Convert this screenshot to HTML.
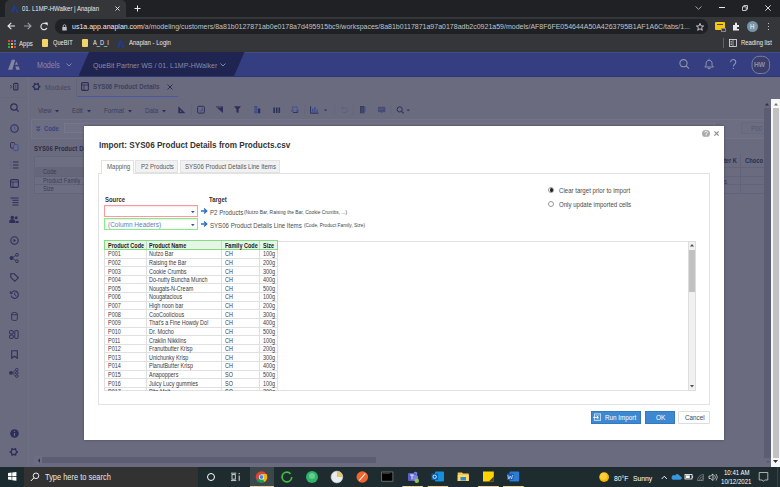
<!DOCTYPE html>
<html><head><meta charset="utf-8">
<style>
*{margin:0;padding:0;box-sizing:border-box}
html,body{width:780px;height:487px;overflow:hidden;background:#6b6b80;font-family:"Liberation Sans",sans-serif}
.a{position:absolute}
.t{position:absolute;white-space:nowrap;line-height:1;transform-origin:0 0;transform:scaleX(.87)}
svg{position:absolute;overflow:visible}
</style></head><body>
<!-- ============ CHROME ============ -->
<div class="a" style="left:0;top:0;width:780px;height:17px;background:#202124"></div>
<div class="a" style="left:4.5px;top:0;width:121.5px;height:17px;background:#35363a;border-radius:5px 5px 0 0"></div>
<svg style="left:10.5px;top:5px" width="8" height="8" viewBox="0 0 8 8"><path d="M0 7.5L2.6 0.6H4.6L2.4 7.5Z M5.2 1.8L6.3 4H4.1Z M4.5 5H6.8L7.4 7.5H5.2Z" fill="#1c3d9c"/></svg>
<div class="t" style="left:22px;top:5.5px;font-size:6.90px;color:#e8eaed">01. L1MP-HWalker | Anaplan</div>
<svg style="left:115px;top:6px" width="5" height="5"><path d="M0.5 0.5L4.5 4.5M4.5 0.5L0.5 4.5" stroke="#e8eaed" stroke-width="0.9"/></svg>
<svg style="left:134px;top:5px" width="7" height="7"><path d="M3.5 0.5V6.5M0.5 3.5H6.5" stroke="#e8eaed" stroke-width="1"/></svg>
<!-- window controls -->
<svg style="left:695px;top:5.5px" width="7" height="4"><path d="M0.5 0.5L3.5 3.3L6.5 0.5" stroke="#bdc1c6" stroke-width="0.8" fill="none"/></svg>
<div class="a" style="left:719px;top:7px;width:6px;height:1px;background:#e8eaed"></div>
<svg style="left:742px;top:4.5px" width="6" height="6"><path d="M0.5 1.8H4.2V5.5H0.5Z M1.8 1.8V0.5H5.5V4.2H4.2" stroke="#e8eaed" stroke-width="0.8" fill="none"/></svg>
<svg style="left:765px;top:4.5px" width="6" height="6"><path d="M0.3 0.3L5.7 5.7M5.7 0.3L0.3 5.7" stroke="#e8eaed" stroke-width="0.9"/></svg>

<!-- toolbar -->
<div class="a" style="left:0;top:17px;width:780px;height:35px;background:#35363a"></div>
<svg style="left:7px;top:22px" width="9" height="8"><path d="M8 4H1.2M4.3 0.8L1 4L4.3 7.2" stroke="#e8eaed" stroke-width="1.1" fill="none"/></svg>
<svg style="left:23px;top:22px" width="9" height="8"><path d="M1 4H7.8M4.7 0.8L8 4L4.7 7.2" stroke="#9aa0a6" stroke-width="1.1" fill="none"/></svg>
<svg style="left:35px;top:18px" width="20" height="16" viewBox="35 18 20 16"><path d="M46.3 24.2A3.2 3.2 0 1 0 46.9 28.0" stroke="#e8eaed" stroke-width="1.1" fill="none"/><path d="M44.5 22.6H47.7V25.8Z" fill="#f4f4f4"/></svg>
<div class="a" style="left:55px;top:19.4px;width:653px;height:14.2px;background:#202124;border-radius:7.1px"></div>
<svg style="left:61.5px;top:23.5px" width="5" height="7"><path d="M1.2 3V2A1.3 1.3 0 0 1 3.8 2V3" stroke="#bdc1c6" stroke-width="0.8" fill="none"/><rect x="0.3" y="3" width="4.4" height="3.5" fill="#bdc1c6"/></svg>
<div class="t" style="left:72px;top:23.2px;font-size:8.05px;color:#bfc3c8"><span style="color:#e8eaed">us1a.app.anaplan.com</span>/a/modeling/customers/8a81b0127871ab0e0178a7d495915bc9/workspaces/8a81b0117871a97a0178adb2c0921a59/models/AF8F6FE054644A50A4263795B1AF1A6C/tabs/1...</div>
<svg style="left:695.5px;top:23px" width="8" height="8"><path d="M4 0.4L5 2.9L7.6 3L5.6 4.7L6.3 7.3L4 5.8L1.7 7.3L2.4 4.7L0.4 3L3 2.9Z" stroke="#e8eaed" stroke-width="0.8" fill="none"/></svg>
<div class="a" style="left:715px;top:22px;width:10px;height:8px;background:#f5c518;border-radius:1px"></div>
<div class="a" style="left:717px;top:24px;width:6px;height:1px;background:#5a4a10"></div>
<div class="a" style="left:721px;top:28px;width:5px;height:4px;background:#3c3c3c;border:0.5px solid #888"></div>
<svg style="left:732px;top:22px" width="9" height="9"><path d="M1 3H3V1.5A1 1 0 0 1 5 1.5V3H7V5H5.8A1 1 0 0 0 5.8 7H7V8.5H1Z" fill="#e8eaed"/></svg>
<div class="a" style="left:747px;top:21px;width:11px;height:11px;border-radius:50%;background:#7a93a6"></div>
<div class="t" style="left:750.3px;top:23.6px;font-size:6.90px;color:#fff">H</div>
<div class="a" style="left:768px;top:22.5px;width:1.3px;height:1.3px;background:#e8eaed;border-radius:50%;box-shadow:0 3px 0 #e8eaed,0 6px 0 #e8eaed"></div>

<!-- bookmarks -->
<svg style="left:7.5px;top:39.5px" width="8" height="8"><g>
<rect x="0" y="0" width="2" height="2" fill="#ea4335"/><rect x="3" y="0" width="2" height="2" fill="#ea4335"/><rect x="6" y="0" width="2" height="2" fill="#4285f4"/>
<rect x="0" y="3" width="2" height="2" fill="#34a853"/><rect x="3" y="3" width="2" height="2" fill="#fbbc04"/><rect x="6" y="3" width="2" height="2" fill="#4285f4"/>
<rect x="0" y="6" width="2" height="2" fill="#34a853"/><rect x="3" y="6" width="2" height="2" fill="#fbbc04"/><rect x="6" y="6" width="2" height="2" fill="#ea4335"/></g></svg>
<div class="t" style="left:19px;top:39.7px;font-size:7.01px;color:#e8eaed">Apps</div>
<div class="a" style="left:42px;top:39px;width:6px;height:8px;background:#f2d46a;border-radius:1px"></div>
<div class="t" style="left:53px;top:39.7px;font-size:6.55px;color:#e8eaed">QueBIT</div>
<div class="a" style="left:82px;top:39px;width:6px;height:8px;background:#f2d46a;border-radius:1px"></div>
<div class="t" style="left:93px;top:39.7px;font-size:6.55px;color:#e8eaed">A_D_I</div>
<svg style="left:117px;top:39.5px" width="8" height="8" viewBox="0 0 8 8"><path d="M0 7.5L2.6 0.6H4.6L2.4 7.5Z M5.2 1.8L6.3 4H4.1Z M4.5 5H6.8L7.4 7.5H5.2Z" fill="#1c3d9c"/></svg>
<div class="t" style="left:128.5px;top:39.7px;font-size:6.88px;color:#e8eaed">Anaplan - Login</div>
<div class="a" style="left:723px;top:38px;width:1px;height:10px;background:#5f6368"></div>
<svg style="left:729px;top:39px" width="8" height="8"><rect x="0.5" y="0.5" width="7" height="7" stroke="#e8eaed" stroke-width="0.8" fill="none"/><path d="M4 0.5V7.5M1.5 2.5H3M1.5 4H3M1.5 5.5H3" stroke="#e8eaed" stroke-width="0.6"/></svg>
<div class="t" style="left:741px;top:39.7px;font-size:6.79px;color:#e8eaed">Reading list</div>

<!-- ============ ANAPLAN HEADER ============ -->
<div class="a" style="left:0;top:52px;width:780px;height:25px;background:#343e80"></div><div class="a" style="left:0;top:52px;width:780px;height:1px;background:#454c7e"></div><div class="a" style="left:0;top:75.6px;width:780px;height:1px;background:#2e3776"></div>
<div class="a" style="left:78.5px;top:52px;width:166px;height:24px;background:#1f2450;clip-path:polygon(10.5px 0,166px 0,155.5px 24px,0 24px)"></div>
<svg style="left:0;top:52px" width="30" height="25" viewBox="0 52 30 25"><path d="M8 69.7L11.8 59.7H15.2L12.3 69.7Z M16.4 61.5L18 64.8H14.9Z M15.4 66.6H18.7L19.8 69.7H16.4Z" fill="#85859b"/></svg>
<div class="t" style="left:36.5px;top:61.5px;font-size:8.16px;color:#898ba5">Models</div>
<svg style="left:65.5px;top:63px" width="6" height="4"><path d="M0.5 0.5L3 3L5.5 0.5" stroke="#868aa9" stroke-width="1" fill="none"/></svg>
<div class="t" style="left:92.5px;top:61.5px;font-size:8.05px;color:#898ba5">QueBit Partner WS / 01. L1MP-HWalker</div>
<svg style="left:220px;top:63px" width="6" height="4"><path d="M0.5 0.5L3 3L5.5 0.5" stroke="#868aa9" stroke-width="1" fill="none"/></svg>
<!-- header right icons -->
<svg style="left:660px;top:52px" width="120" height="25" viewBox="660 52 120 25">
<circle cx="683.5" cy="63.2" r="3.6" stroke="#9395ab" stroke-width="1.1" fill="none"/><path d="M686.2 65.9L689 68.7" stroke="#9395ab" stroke-width="1.2"/>
<path d="M704.8 67H713.4L712 65.2V62.5A3 3 0 0 0 706.2 62.5V65.2Z" stroke="#9395ab" stroke-width="1" fill="none" stroke-linejoin="round"/><path d="M707.8 68.6H710.4" stroke="#9395ab" stroke-width="1"/><path d="M709.1 58.6V59.6" stroke="#9395ab" stroke-width="0.9"/>
<path d="M730.6 62.2A2.6 2.6 0 1 1 734.6 64.3C733.6 65 733.4 65.5 733.4 66.5" stroke="#9395ab" stroke-width="1.1" fill="none"/><circle cx="733.4" cy="68.4" r="0.65" fill="#9395ab"/>
<rect x="752" y="56.3" width="17.6" height="17.2" rx="7" fill="#3a3e6c" stroke="#7c7e96" stroke-width="1"/>
</svg>
<div class="t" style="left:753.8px;top:61px;font-size:7.70px;font-weight:bold;color:#8c8ca0">HW</div>

<!-- ============ ANAPLAN APP (dimmed) ============ -->
<div class="a" style="left:27.5px;top:77px;width:1px;height:390px;background:#6e6e84"></div>
<div class="a" style="left:0;top:97px;width:28px;height:1px;background:#68687d"></div>
<!-- tab row -->
<div class="a" style="left:75.5px;top:79px;width:1px;height:17px;background:#64647a"></div>
<svg style="left:28px;top:78px" width="20" height="18" viewBox="28 78 20 18"><polygon points="39.30,86.60 37.85,89.11 34.95,89.11 33.50,86.60 34.95,84.09 37.85,84.09" stroke="#2c2f58" stroke-width="1.25" fill="none"/><circle cx="39.70" cy="86.60" r="0.9" fill="#2c2f58"/><circle cx="38.05" cy="89.46" r="0.9" fill="#2c2f58"/><circle cx="34.75" cy="89.46" r="0.9" fill="#2c2f58"/><circle cx="33.10" cy="86.60" r="0.9" fill="#2c2f58"/><circle cx="34.75" cy="83.74" r="0.9" fill="#2c2f58"/><circle cx="38.05" cy="83.74" r="0.9" fill="#2c2f58"/></svg>
<div class="t" style="left:44.6px;top:83.7px;font-size:7.82px;color:#45475f">Modules</div>
<svg style="left:81px;top:82px" width="8" height="9"><rect x="0.6" y="0.6" width="6.8" height="7.8" rx="1.2" stroke="#2c2f58" stroke-width="1.1" fill="none"/><path d="M0.6 3H7.4M3 3V8.4" stroke="#2c2f58" stroke-width="0.8"/></svg>
<div class="t" style="left:92.9px;top:83.7px;font-size:7.13px;font-weight:bold;color:#3d3f5e">SYS06 Product Details</div>
<svg style="left:166.5px;top:84px" width="6" height="6"><path d="M0.5 0.5L5.5 5.5M5.5 0.5L0.5 5.5" stroke="#2c2f58" stroke-width="1"/></svg>
<div class="a" style="left:77px;top:96px;width:101px;height:1px;background:#4a56a6"></div>

<!-- sidebar icons -->
<svg style="left:0;top:78px" width="28" height="19" viewBox="0 78 28 19"><path d="M10 85.1L11.9 86.7L10 88.3" stroke="#2c2f58" stroke-width="0.8" fill="none"/><rect x="13.6" y="83.4" width="4.3" height="6.5" rx="1" stroke="#2c2f58" stroke-width="1.1" fill="none"/><path d="M15.75 84.5V88.8" stroke="#2c2f58" stroke-width="0.6"/></svg>
<svg style="left:9.5px;top:103px" width="10" height="10"><circle cx="4" cy="4" r="3.2" stroke="#2c2f58" stroke-width="1.2" fill="none"/><path d="M6.3 6.3L8.6 8.6" stroke="#2c2f58" stroke-width="1.3"/></svg>
<svg style="left:9.5px;top:124px" width="9" height="9"><circle cx="4.5" cy="4.5" r="3.7" stroke="#2c2f58" stroke-width="1.1" fill="none"/><path d="M4.5 2.3V4.7L6 5.6" stroke="#3e4fa0" stroke-width="0.9" fill="none"/></svg>
<svg style="left:10px;top:142px" width="9" height="9"><rect x="0.6" y="0.6" width="4" height="5.5" rx="0.8" stroke="#2c2f58" stroke-width="1" fill="none"/><rect x="3.6" y="2.6" width="4.5" height="6" rx="0.8" stroke="#3e4fa0" stroke-width="1" fill="#6b6b80"/></svg>
<svg style="left:10px;top:161px" width="9" height="8"><path d="M0.5 1H1.5M0.5 4H1.5M0.5 7H1.5" stroke="#3e4fa0" stroke-width="1"/><path d="M3 1H8.5M3 4H8.5M3 7H8.5" stroke="#2c2f58" stroke-width="1"/></svg>
<svg style="left:9.5px;top:178.5px" width="9" height="9"><rect x="0.6" y="0.6" width="7.8" height="7.8" rx="1.2" stroke="#2c2f58" stroke-width="1.1" fill="none"/><path d="M0.6 3H8.4M3 3V8.4" stroke="#2c2f58" stroke-width="0.8"/></svg>
<svg style="left:10px;top:197px" width="9" height="9"><path d="M0.5 1H8.5M2.5 3.3H8.5M2.5 5.6H8.5M2.5 8H8.5" stroke="#2c2f58" stroke-width="1"/></svg>
<svg style="left:9px;top:215px" width="10" height="9"><circle cx="3.3" cy="2.6" r="1.8" fill="#2c2f58"/><circle cx="7.2" cy="2.8" r="1.5" fill="#2c2f58"/><path d="M0.3 8V6.6A2.5 2 0 0 1 6.3 6.6V8Z M6.8 8V6.3A2 1.8 0 0 1 9.7 6.6V8Z" fill="#2c2f58"/></svg>
<svg style="left:9.5px;top:235.5px" width="9" height="9"><circle cx="4.5" cy="4.5" r="3.7" stroke="#2c2f58" stroke-width="1.1" fill="none"/><path d="M3.5 2.8L6 4.5L3.5 6.2Z" fill="#2c2f58"/></svg>
<svg style="left:9px;top:253px" width="11" height="10"><circle cx="2.5" cy="5" r="1.9" fill="#2c2f58"/><circle cx="8" cy="1.8" r="1.4" stroke="#2c2f58" stroke-width="0.9" fill="none"/><circle cx="8" cy="8.2" r="1.4" stroke="#2c2f58" stroke-width="0.9" fill="none"/><path d="M4 4.2L6.8 2.5M4 5.8L6.8 7.5" stroke="#2c2f58" stroke-width="0.8"/></svg>
<svg style="left:9.5px;top:272.5px" width="9" height="9"><path d="M0.8 0.8H4.3L8.3 4.8L4.8 8.3L0.8 4.3Z" stroke="#2c2f58" stroke-width="1.1" fill="none"/></svg>
<svg style="left:9.5px;top:290px" width="9" height="9"><path d="M1.3 3A3.7 3.7 0 1 1 1 5.5" stroke="#2c2f58" stroke-width="1.1" fill="none"/><path d="M0.3 1.2V3.5H2.6" stroke="#2c2f58" stroke-width="0.9" fill="none"/><path d="M4.7 2.5V4.8L6.3 5.8" stroke="#2c2f58" stroke-width="0.9" fill="none"/></svg>
<svg style="left:10.5px;top:311.5px" width="7" height="9"><ellipse cx="3.5" cy="1.7" rx="2.8" ry="1.2" stroke="#2c2f58" stroke-width="0.9" fill="none"/><path d="M0.7 1.7V7.3A2.8 1.2 0 0 0 6.3 7.3V1.7" stroke="#2c2f58" stroke-width="0.9" fill="none"/></svg>
<svg style="left:9px;top:329.5px" width="10" height="9"><rect x="5.8" y="0.6" width="3.3" height="7.8" rx="0.6" stroke="#2c2f58" stroke-width="1" fill="none"/><rect x="0.6" y="0.6" width="3.6" height="3.3" rx="0.6" stroke="#2c2f58" stroke-width="1" fill="none"/><rect x="0.6" y="5.1" width="3.6" height="3.3" rx="0.6" stroke="#2c2f58" stroke-width="1" fill="none"/></svg>
<svg style="left:11px;top:350px" width="7" height="9"><path d="M0.7 0.7H6.3V8.3L3.5 6.3L0.7 8.3Z" stroke="#2c2f58" stroke-width="1.1" fill="none"/></svg>
<svg style="left:9px;top:368px" width="10" height="10"><rect x="0.3" y="3.3" width="3.2" height="3.2" fill="#2c2f58"/><circle cx="7.8" cy="1.7" r="1.3" stroke="#2c2f58" stroke-width="0.9" fill="none"/><circle cx="7.8" cy="4.9" r="1.3" stroke="#2c2f58" stroke-width="0.9" fill="none"/><circle cx="7.8" cy="8.1" r="1.3" stroke="#2c2f58" stroke-width="0.9" fill="none"/><path d="M3.5 4.9H6.5M3.5 4.5L6.5 1.9M3.5 5.3L6.5 7.9" stroke="#2c2f58" stroke-width="0.7"/></svg>
<svg style="left:9.5px;top:429px" width="9" height="9"><circle cx="4.5" cy="4.5" r="4.3" fill="#2c2f58"/><path d="M4.5 4V7" stroke="#6b6b80" stroke-width="1.2"/><circle cx="4.5" cy="2.4" r="0.7" fill="#6b6b80"/></svg>
<svg style="left:0;top:440px" width="28" height="24" viewBox="0 440 28 24"><polygon points="16.80,451.90 15.30,454.50 12.30,454.50 10.80,451.90 12.30,449.30 15.30,449.30" stroke="#2c2f58" stroke-width="1.3" fill="none"/><circle cx="17.20" cy="451.90" r="0.95" fill="#2c2f58"/><circle cx="15.50" cy="454.84" r="0.95" fill="#2c2f58"/><circle cx="12.10" cy="454.84" r="0.95" fill="#2c2f58"/><circle cx="10.40" cy="451.90" r="0.95" fill="#2c2f58"/><circle cx="12.10" cy="448.96" r="0.95" fill="#2c2f58"/><circle cx="15.50" cy="448.96" r="0.95" fill="#2c2f58"/></svg>

<!-- toolbar row -->
<div class="t" style="left:37.7px;top:107.1px;font-size:7.24px;color:#3c3e58">View</div>
<svg style="left:55px;top:110px" width="4" height="3"><path d="M0 0H4L2 2.4Z" fill="#2c2f58"/></svg>
<div class="t" style="left:72.4px;top:107.1px;font-size:7.24px;color:#3c3e58">Edit</div>
<svg style="left:87px;top:110px" width="4" height="3"><path d="M0 0H4L2 2.4Z" fill="#2c2f58"/></svg>
<div class="t" style="left:104.2px;top:107.1px;font-size:7.24px;color:#3c3e58">Format</div>
<svg style="left:127.5px;top:110px" width="4" height="3"><path d="M0 0H4L2 2.4Z" fill="#2c2f58"/></svg>
<div class="t" style="left:145.2px;top:107.1px;font-size:7.24px;color:#3c3e58">Data</div>
<svg style="left:161.5px;top:110px" width="4" height="3"><path d="M0 0H4L2 2.4Z" fill="#2c2f58"/></svg>
<svg style="left:0;top:100px" width="420" height="20" viewBox="0 100 420 20">
<path d="M178.3 106.2V113.3H185.4Z" fill="#2c2f58"/><path d="M180 110V111.8H181.8Z" fill="#6b6b80"/>
<path d="M191.5 105V115" stroke="#64647a" stroke-width="0.8"/>
<rect x="197.6" y="106.3" width="6.8" height="6.8" rx="1" stroke="#2c2f58" stroke-width="1" fill="none"/><path d="M202.2 107.8V110.8H199.5" stroke="#3e4c92" stroke-width="1" fill="none"/>
<path d="M215.5 106.5H223V113Z" fill="#2c2f58"/><path d="M217 107.5H221" stroke="#6b6b80" stroke-width="0.5"/>
<path d="M234 106.3H241L238.6 109.3V113L236.4 112.2V109.3Z" fill="#2c2f58"/>
<rect x="254.3" y="106" width="3" height="7.3" fill="#3e4c92"/><rect x="257.8" y="108.5" width="2.5" height="4.8" fill="#2c2f58"/><path d="M254.3 108.4H257.3M254.3 110.6H257.3" stroke="#6b6b80" stroke-width="0.5"/>
<rect x="273.3" y="107.5" width="1.6" height="5.5" fill="#2c2f58"/><rect x="275.9" y="107.5" width="1.6" height="5.5" fill="#2c2f58"/><rect x="278.5" y="107.5" width="1.6" height="5.5" fill="#2c2f58"/>
<path d="M291.8 107H297.5M293 107L292 110.5M296.5 107L298 110.5" stroke="#3e4c92" stroke-width="0.8" fill="none"/><path d="M291 110.3A1.5 1.5 0 0 0 294 110.3Z M295.8 110.3A1.6 1.6 0 0 0 299 110.3Z" fill="#3e4c92"/><path d="M293 112.5H298" stroke="#2c2f58" stroke-width="0.9"/>
<path d="M305 105V115" stroke="#64647a" stroke-width="0.8"/>
<path d="M310.6 106.3V113.2H318.6" stroke="#2c2f58" stroke-width="1" fill="none"/><rect x="312" y="108.5" width="1.4" height="4.2" fill="#3e4c92"/><rect x="314.2" y="107" width="1.4" height="5.7" fill="#3e4c92"/><rect x="316.4" y="109.5" width="1.4" height="3.2" fill="#3e4c92"/>
<path d="M323.8 109.4H327.2L325.5 111.2Z" fill="#2c2f58"/>
<path d="M334.7 105V115" stroke="#64647a" stroke-width="0.8"/>
<path d="M341.5 108H345.5A2.2 2.2 0 0 1 345.5 112.5H343M343 106.3L341.3 108L343 109.7" stroke="#5d5f7c" stroke-width="0.9" fill="none"/>
<path d="M353.3 105V115" stroke="#64647a" stroke-width="0.8"/>
<rect x="360" y="106" width="4.4" height="7.3" fill="#3a3c5c"/><path d="M360.8 108H363.6M360.8 110H363.6M360.8 112H363.6" stroke="#5a5b74" stroke-width="0.7"/><path d="M365 106.5V112" stroke="#3e4c92" stroke-width="0.9"/>
<rect x="378" y="106.8" width="7.3" height="4.2" fill="#4a4c6c"/><path d="M379.3 108.2V110M381 108.2V110M382.7 108.2V110" stroke="#6b6b80" stroke-width="0.5"/><rect x="378" y="111" width="7.3" height="1.2" fill="#3e4c92"/><path d="M381.6 112V113.2" stroke="#3e4c92" stroke-width="0.9"/>
<path d="M390.8 105V115" stroke="#64647a" stroke-width="0.8"/>
<circle cx="399.7" cy="109.4" r="2.6" stroke="#2c2f58" stroke-width="1" fill="none"/><path d="M401.6 111.3L403.7 113.4" stroke="#2c2f58" stroke-width="1.1"/>
<path d="M406.5 109.6H409.9L408.2 111.3Z" fill="#2c2f58"/>
</svg>

<!-- filter bar -->
<div class="a" style="left:30.8px;top:118.8px;width:740px;height:20px;background:#6e6e83;border:1px solid #737388"></div>
<div class="a" style="left:63.5px;top:122.8px;width:651.8px;height:10.6px;background:#6f6f85;border:1px solid #77778c"></div>
<svg style="left:35.6px;top:126px" width="5" height="6"><path d="M0.5 0.5L2.3 2.1L4.1 0.5M0.5 3.1L2.3 4.7L4.1 3.1" stroke="#36468a" stroke-width="1.1" fill="none"/></svg>
<div class="t" style="left:44.3px;top:126px;font-size:6.79px;font-weight:bold;color:#36457f">Code</div>
<div class="t" style="left:33.6px;top:146px;font-size:6.79px;font-weight:bold;color:#2c2d45;letter-spacing:0.1px">SYS06 Product Details</div>
<!-- page grid -->
<div class="a" style="left:34px;top:156.3px;width:60px;height:37.5px;background:#6e6e83;border:1px solid #64647a"></div>
<div class="a" style="left:34px;top:167px;width:60px;height:9px;background:#66667b"></div>
<div class="a" style="left:34px;top:175.6px;width:60px;height:1px;background:#62627a"></div>
<div class="a" style="left:34px;top:183.9px;width:60px;height:1px;background:#62627a"></div>
<div class="t" style="left:43.2px;top:169px;font-size:6.44px;color:#3a3b55">Code</div>
<div class="t" style="left:43.2px;top:177.5px;font-size:6.44px;color:#3a3b55">Product Family</div>
<div class="t" style="left:43.2px;top:186px;font-size:6.44px;color:#3a3b55">Size</div>
<!-- right of modal -->
<div class="a" style="left:740.5px;top:122px;width:30px;height:12px;border:1px solid #68687e;border-radius:2px;background:#6d6d82"></div>
<div class="t" style="left:750.8px;top:125px;font-size:7.24px;color:#55566e">P00</div>
<div class="a" style="left:724px;top:154px;width:40px;height:39px;background:#6b6b80"></div>
<div class="t" style="left:722.2px;top:158px;font-size:6.61px;font-weight:bold;color:#2c2d45">tter K</div>
<div class="t" style="left:745.3px;top:158px;font-size:6.61px;font-weight:bold;color:#2c2d45">Choco</div>
<div class="a" style="left:740px;top:154px;width:1px;height:39px;background:#62627a"></div>
<div class="a" style="left:724px;top:167px;width:40px;height:1px;background:#62627a"></div>
<div class="a" style="left:724px;top:175.5px;width:40px;height:1px;background:#62627a"></div>
<div class="a" style="left:724px;top:184px;width:40px;height:1px;background:#62627a"></div>
<div class="a" style="left:724px;top:192.5px;width:40px;height:1px;background:#62627a"></div>
<div class="t" style="left:724px;top:177.5px;font-size:7.47px;color:#3a3b55">s</div>
<!-- inner page scrollbars -->
<div class="a" style="left:763.5px;top:99px;width:7.5px;height:9px;background:#6a6a7f"></div><div class="a" style="left:763.5px;top:108px;width:7.5px;height:350px;background:#5c5c72"></div><div class="a" style="left:763.5px;top:458px;width:7.5px;height:7px;background:#6b6b80"></div><svg style="left:765.5px;top:460.8px" width="4" height="3"><path d="M0 0H4L2 2.2Z" fill="#55566c"/></svg>
<svg style="left:765.3px;top:102.6px" width="4" height="3"><path d="M0 2.4H4L2 0Z" fill="#2c2d45"/></svg>
<div class="a" style="left:34px;top:455.5px;width:8.3px;height:9px;background:#6e6e83"></div><div class="a" style="left:42.3px;top:456.6px;width:333.8px;height:6.6px;background:#5c5c72"></div><svg style="left:36.5px;top:457.5px" width="4" height="5"><path d="M3 0.3L0.8 2.5L3 4.7Z" fill="#2c2d45"/></svg>
<!-- browser scrollbar (not dimmed) -->
<div class="a" style="left:771px;top:99px;width:9px;height:368px;background:#f7f7f7"></div>
<div class="a" style="left:773px;top:108px;width:5.8px;height:349.6px;background:#c1c1c1"></div>
<svg style="left:774px;top:102.8px" width="4" height="3"><path d="M0 2.4H4L2 0Z" fill="#707070"/></svg>
<svg style="left:773.4px;top:460.4px" width="5" height="3"><path d="M0 0H5L2.5 3Z" fill="#333"/></svg>

<!-- ============ MODAL ============ -->
<div class="a" style="left:84px;top:126px;width:640px;height:314px;background:#fff;box-shadow:0 0 2.5px rgba(30,30,50,.45)"></div>
<div class="t" style="left:99px;top:141px;font-size:9.37px;font-weight:bold;color:#333">Import: SYS06 Product Details from Products.csv</div>
<div class="a" style="left:702.2px;top:129.9px;width:7.6px;height:7.6px;border-radius:50%;background:#ababab"></div>
<svg style="left:695px;top:125px" width="20" height="20" viewBox="695 125 20 20"><path d="M704.8 132.5A1.3 1.3 0 1 1 706.9 133.4C706.3 133.8 706.1 134.1 706.1 134.8" stroke="#fff" stroke-width="1" fill="none"/><circle cx="706.1" cy="136" r="0.55" fill="#fff"/></svg>
<svg style="left:713.8px;top:131.2px" width="5" height="5"><path d="M0.4 0.4L4.6 4.6M4.6 0.4L0.4 4.6" stroke="#909090" stroke-width="1.3"/></svg>

<!-- tabs -->
<div class="a" style="left:98px;top:173px;width:612px;height:232px;border:1px solid #e2e2e2"></div>
<div class="a" style="left:100.5px;top:160px;width:33.5px;height:14px;background:#fff;border:1px solid #e2e2e2;border-bottom:none"></div>
<div class="a" style="left:135.2px;top:160px;width:42.4px;height:13px;background:#f1f1f1;border:1px solid #e2e2e2"></div>
<div class="a" style="left:179.6px;top:160px;width:100.6px;height:13px;background:#f1f1f1;border:1px solid #e2e2e2"></div>
<div class="t" style="left:106.5px;top:163.9px;font-size:6.95px;color:#575757">Mapping</div>
<div class="t" style="left:141.2px;top:163.9px;font-size:6.95px;color:#575757">P2 Products</div>
<div class="t" style="left:184.7px;top:163.9px;font-size:6.95px;color:#575757">SYS06 Product Details Line Items</div>

<!-- source/target -->
<div class="t" style="left:105px;top:196.6px;font-size:6.84px;font-weight:bold;color:#333">Source</div>
<div class="t" style="left:209.2px;top:196.6px;font-size:6.84px;font-weight:bold;color:#333">Target</div>
<div class="a" style="left:104px;top:205px;width:93.5px;height:11.8px;border:1px solid #fb9a9a;background:#fff;box-shadow:inset 0 1px 1.5px rgba(0,0,0,.09)"></div>
<svg style="left:190.5px;top:210.5px" width="4" height="3"><path d="M0 0H3.6L1.8 2.2Z" fill="#3a5a8a"/></svg>
<div class="a" style="left:104px;top:218px;width:93.5px;height:12px;border:1px solid #86ec86;background:#fff;box-shadow:inset 0 1px 1.5px rgba(0,0,0,.09)"></div>
<svg style="left:190.5px;top:223.5px" width="4" height="3"><path d="M0 0H3.6L1.8 2.2Z" fill="#3a5a8a"/></svg>
<div class="t" style="left:107.6px;top:220.9px;font-size:7.47px;color:#5a80c0">(Column Headers)</div>
<svg style="left:200.5px;top:208px" width="7" height="6"><path d="M0 3H5M3 0.5L5.8 3L3 5.5" stroke="#2a6fbf" stroke-width="1.3" fill="none"/></svg>
<svg style="left:200.5px;top:220.5px" width="7" height="6"><path d="M0 3H5M3 0.5L5.8 3L3 5.5" stroke="#2a6fbf" stroke-width="1.3" fill="none"/></svg>
<div class="t" style="left:210px;top:209.2px;font-size:7.01px;color:#4d4d4d">P2 Products</div><div class="t" style="left:244.2px;top:210.3px;font-size:5.58px;color:#444">(Nutzo Bar, Raising the Bar, Cookie Crumbs, ...)</div>
<div class="t" style="left:210px;top:221.6px;font-size:7.01px;color:#4d4d4d">SYS06 Product Details Line Items</div><div class="t" style="left:303.7px;top:222.7px;font-size:5.52px;color:#444">(Code, Product Family, Size)</div>

<!-- radios -->
<div class="a" style="left:548.3px;top:186.9px;width:6px;height:6px;border-radius:50%;border:1px solid #999;background:#fff"></div>
<div class="a" style="left:549.5px;top:188.1px;width:3.6px;height:3.6px;border-radius:50%;background:#222"></div>
<div class="t" style="left:558.5px;top:186.9px;font-size:7.0px;color:#4a4a4a">Clear target prior to import</div>
<div class="a" style="left:548.3px;top:200.7px;width:6px;height:6px;border-radius:50%;border:1px solid #999;background:#fff"></div>
<div class="t" style="left:558.5px;top:200.7px;font-size:7.0px;color:#4a4a4a">Only update imported cells</div>

<!-- grid box -->
<div class="a" style="left:104px;top:241px;width:592px;height:150px;border:1px solid #e0e0e0;border-right:none;border-left:none"></div>
<div id="tbl" class="a" style="left:0;top:0;width:780px;height:390.5px;overflow:hidden"><div class="a" style="left:104.2px;top:240.8px;width:1px;height:155.2px;background:#e0e0e0"></div>
<div class="a" style="left:145.7px;top:240.8px;width:1px;height:155.2px;background:#e0e0e0"></div>
<div class="a" style="left:221.1px;top:240.8px;width:1px;height:155.2px;background:#e0e0e0"></div>
<div class="a" style="left:258.7px;top:240.8px;width:1px;height:155.2px;background:#e0e0e0"></div>
<div class="a" style="left:277.2px;top:240.8px;width:1px;height:155.2px;background:#e0e0e0"></div>
<div class="a" style="left:104.2px;top:257.62px;width:174.0px;height:1px;background:#e0e0e0"></div>
<div class="t" style="left:108.1px;top:251.30px;font-size:6.27px;color:#3a3a3a">P001</div>
<div class="t" style="left:148.9px;top:251.30px;font-size:6.27px;color:#3a3a3a">Nutzo Bar</div>
<div class="t" style="left:224.6px;top:251.30px;font-size:6.27px;color:#3a3a3a">CH</div>
<div class="t" style="left:262.7px;top:251.30px;font-size:6.27px;color:#3a3a3a">100g</div>
<div class="a" style="left:104.2px;top:266.24px;width:174.0px;height:1px;background:#e0e0e0"></div>
<div class="t" style="left:108.1px;top:259.92px;font-size:6.27px;color:#3a3a3a">P002</div>
<div class="t" style="left:148.9px;top:259.92px;font-size:6.27px;color:#3a3a3a">Raising the Bar</div>
<div class="t" style="left:224.6px;top:259.92px;font-size:6.27px;color:#3a3a3a">CH</div>
<div class="t" style="left:262.7px;top:259.92px;font-size:6.27px;color:#3a3a3a">200g</div>
<div class="a" style="left:104.2px;top:274.86px;width:174.0px;height:1px;background:#e0e0e0"></div>
<div class="t" style="left:108.1px;top:268.54px;font-size:6.27px;color:#3a3a3a">P003</div>
<div class="t" style="left:148.9px;top:268.54px;font-size:6.27px;color:#3a3a3a">Cookie Crumbs</div>
<div class="t" style="left:224.6px;top:268.54px;font-size:6.27px;color:#3a3a3a">CH</div>
<div class="t" style="left:262.7px;top:268.54px;font-size:6.27px;color:#3a3a3a">300g</div>
<div class="a" style="left:104.2px;top:283.48px;width:174.0px;height:1px;background:#e0e0e0"></div>
<div class="t" style="left:108.1px;top:277.16px;font-size:6.27px;color:#3a3a3a">P004</div>
<div class="t" style="left:148.9px;top:277.16px;font-size:6.27px;color:#3a3a3a">Do-nutty Buncha Munch</div>
<div class="t" style="left:224.6px;top:277.16px;font-size:6.27px;color:#3a3a3a">CH</div>
<div class="t" style="left:262.7px;top:277.16px;font-size:6.27px;color:#3a3a3a">400g</div>
<div class="a" style="left:104.2px;top:292.10px;width:174.0px;height:1px;background:#e0e0e0"></div>
<div class="t" style="left:108.1px;top:285.78px;font-size:6.27px;color:#3a3a3a">P005</div>
<div class="t" style="left:148.9px;top:285.78px;font-size:6.27px;color:#3a3a3a">Nougats-N-Cream</div>
<div class="t" style="left:224.6px;top:285.78px;font-size:6.27px;color:#3a3a3a">CH</div>
<div class="t" style="left:262.7px;top:285.78px;font-size:6.27px;color:#3a3a3a">500g</div>
<div class="a" style="left:104.2px;top:300.72px;width:174.0px;height:1px;background:#e0e0e0"></div>
<div class="t" style="left:108.1px;top:294.40px;font-size:6.27px;color:#3a3a3a">P006</div>
<div class="t" style="left:148.9px;top:294.40px;font-size:6.27px;color:#3a3a3a">Nougatacious</div>
<div class="t" style="left:224.6px;top:294.40px;font-size:6.27px;color:#3a3a3a">CH</div>
<div class="t" style="left:262.7px;top:294.40px;font-size:6.27px;color:#3a3a3a">100g</div>
<div class="a" style="left:104.2px;top:309.34px;width:174.0px;height:1px;background:#e0e0e0"></div>
<div class="t" style="left:108.1px;top:303.02px;font-size:6.27px;color:#3a3a3a">P007</div>
<div class="t" style="left:148.9px;top:303.02px;font-size:6.27px;color:#3a3a3a">High noon bar</div>
<div class="t" style="left:224.6px;top:303.02px;font-size:6.27px;color:#3a3a3a">CH</div>
<div class="t" style="left:262.7px;top:303.02px;font-size:6.27px;color:#3a3a3a">200g</div>
<div class="a" style="left:104.2px;top:317.96px;width:174.0px;height:1px;background:#e0e0e0"></div>
<div class="t" style="left:108.1px;top:311.64px;font-size:6.27px;color:#3a3a3a">P008</div>
<div class="t" style="left:148.9px;top:311.64px;font-size:6.27px;color:#3a3a3a">CooCoolicious</div>
<div class="t" style="left:224.6px;top:311.64px;font-size:6.27px;color:#3a3a3a">CH</div>
<div class="t" style="left:262.7px;top:311.64px;font-size:6.27px;color:#3a3a3a">300g</div>
<div class="a" style="left:104.2px;top:326.58px;width:174.0px;height:1px;background:#e0e0e0"></div>
<div class="t" style="left:108.1px;top:320.26px;font-size:6.27px;color:#3a3a3a">P009</div>
<div class="t" style="left:148.9px;top:320.26px;font-size:6.27px;color:#3a3a3a">That's a Fine Howdy Do!</div>
<div class="t" style="left:224.6px;top:320.26px;font-size:6.27px;color:#3a3a3a">CH</div>
<div class="t" style="left:262.7px;top:320.26px;font-size:6.27px;color:#3a3a3a">400g</div>
<div class="a" style="left:104.2px;top:335.20px;width:174.0px;height:1px;background:#e0e0e0"></div>
<div class="t" style="left:108.1px;top:328.88px;font-size:6.27px;color:#3a3a3a">P010</div>
<div class="t" style="left:148.9px;top:328.88px;font-size:6.27px;color:#3a3a3a">Dr. Mocho</div>
<div class="t" style="left:224.6px;top:328.88px;font-size:6.27px;color:#3a3a3a">CH</div>
<div class="t" style="left:262.7px;top:328.88px;font-size:6.27px;color:#3a3a3a">500g</div>
<div class="a" style="left:104.2px;top:343.82px;width:174.0px;height:1px;background:#e0e0e0"></div>
<div class="t" style="left:108.1px;top:337.50px;font-size:6.27px;color:#3a3a3a">P011</div>
<div class="t" style="left:148.9px;top:337.50px;font-size:6.27px;color:#3a3a3a">Craklin Nikklins</div>
<div class="t" style="left:224.6px;top:337.50px;font-size:6.27px;color:#3a3a3a">CH</div>
<div class="t" style="left:262.7px;top:337.50px;font-size:6.27px;color:#3a3a3a">100g</div>
<div class="a" style="left:104.2px;top:352.44px;width:174.0px;height:1px;background:#e0e0e0"></div>
<div class="t" style="left:108.1px;top:346.12px;font-size:6.27px;color:#3a3a3a">P012</div>
<div class="t" style="left:148.9px;top:346.12px;font-size:6.27px;color:#3a3a3a">Franutbutter Krisp</div>
<div class="t" style="left:224.6px;top:346.12px;font-size:6.27px;color:#3a3a3a">CH</div>
<div class="t" style="left:262.7px;top:346.12px;font-size:6.27px;color:#3a3a3a">200g</div>
<div class="a" style="left:104.2px;top:361.06px;width:174.0px;height:1px;background:#e0e0e0"></div>
<div class="t" style="left:108.1px;top:354.74px;font-size:6.27px;color:#3a3a3a">P013</div>
<div class="t" style="left:148.9px;top:354.74px;font-size:6.27px;color:#3a3a3a">Unichunky Krisp</div>
<div class="t" style="left:224.6px;top:354.74px;font-size:6.27px;color:#3a3a3a">CH</div>
<div class="t" style="left:262.7px;top:354.74px;font-size:6.27px;color:#3a3a3a">300g</div>
<div class="a" style="left:104.2px;top:369.68px;width:174.0px;height:1px;background:#e0e0e0"></div>
<div class="t" style="left:108.1px;top:363.36px;font-size:6.27px;color:#3a3a3a">P014</div>
<div class="t" style="left:148.9px;top:363.36px;font-size:6.27px;color:#3a3a3a">PlanutButter Krisp</div>
<div class="t" style="left:224.6px;top:363.36px;font-size:6.27px;color:#3a3a3a">CH</div>
<div class="t" style="left:262.7px;top:363.36px;font-size:6.27px;color:#3a3a3a">400g</div>
<div class="a" style="left:104.2px;top:378.30px;width:174.0px;height:1px;background:#e0e0e0"></div>
<div class="t" style="left:108.1px;top:371.98px;font-size:6.27px;color:#3a3a3a">P015</div>
<div class="t" style="left:148.9px;top:371.98px;font-size:6.27px;color:#3a3a3a">Anapoppers</div>
<div class="t" style="left:224.6px;top:371.98px;font-size:6.27px;color:#3a3a3a">SO</div>
<div class="t" style="left:262.7px;top:371.98px;font-size:6.27px;color:#3a3a3a">500g</div>
<div class="a" style="left:104.2px;top:386.92px;width:174.0px;height:1px;background:#e0e0e0"></div>
<div class="t" style="left:108.1px;top:380.60px;font-size:6.27px;color:#3a3a3a">P016</div>
<div class="t" style="left:148.9px;top:380.60px;font-size:6.27px;color:#3a3a3a">Juicy Lucy gummies</div>
<div class="t" style="left:224.6px;top:380.60px;font-size:6.27px;color:#3a3a3a">SO</div>
<div class="t" style="left:262.7px;top:380.60px;font-size:6.27px;color:#3a3a3a">100g</div>
<div class="a" style="left:104.2px;top:395.54px;width:174.0px;height:1px;background:#e0e0e0"></div>
<div class="t" style="left:108.1px;top:389.22px;font-size:6.27px;color:#3a3a3a">P017</div>
<div class="t" style="left:148.9px;top:389.22px;font-size:6.27px;color:#3a3a3a">Pita Melt</div>
<div class="t" style="left:224.6px;top:389.22px;font-size:6.27px;color:#3a3a3a">SO</div>
<div class="t" style="left:262.7px;top:389.22px;font-size:6.27px;color:#3a3a3a">200g</div>
<div class="a" style="left:104.2px;top:240.3px;width:174.0px;height:9.7px;background:#e6f6e6;border:1px solid #80dd80"></div>
<div class="a" style="left:145.7px;top:240.8px;width:1px;height:8.7px;background:#c8d8c8"></div>
<div class="a" style="left:221.1px;top:240.8px;width:1px;height:8.7px;background:#c8d8c8"></div>
<div class="a" style="left:258.7px;top:240.8px;width:1px;height:8.7px;background:#c8d8c8"></div>
<div class="t" style="left:108.1px;top:242.60px;font-size:6.33px;font-weight:bold;color:#222">Product Code</div>
<div class="t" style="left:148.9px;top:242.60px;font-size:6.33px;font-weight:bold;color:#222">Product Name</div>
<div class="t" style="left:224.6px;top:242.60px;font-size:6.33px;font-weight:bold;color:#222">Family Code</div>
<div class="t" style="left:262.7px;top:242.60px;font-size:6.33px;font-weight:bold;color:#222">Size</div></div><!--tblend-->
<!-- grid scrollbar -->
<div class="a" style="left:687.5px;top:241px;width:8.5px;height:150px;background:#f1f1f1;border:1px solid #ddd"></div>
<div class="a" style="left:689px;top:249.5px;width:5.5px;height:42px;background:#c1c1c1"></div>
<svg style="left:689.5px;top:244px" width="4" height="3"><path d="M0 2.5H4L2 0Z" fill="#505050"/></svg>
<svg style="left:689.5px;top:384.5px" width="4" height="3"><path d="M0 0H4L2 2.5Z" fill="#505050"/></svg>

<!-- buttons -->
<div class="a" style="left:591px;top:410.9px;width:50.2px;height:13.1px;background:#3d89d1;border:0.6px solid #3179c2"></div>
<svg style="left:589px;top:409px" width="20" height="17" viewBox="589 409 20 17"><rect x="594.4" y="413.9" width="6.2" height="6.5" stroke="#d6e6f7" stroke-width="0.8" fill="none"/><path d="M595.5 415.3H599.5M596.5 419H599.5" stroke="#b9d3f0" stroke-width="0.6"/><path d="M593.2 417.3H598.2M596.9 416L598.3 417.3L596.9 418.6" stroke="#fff" stroke-width="1" fill="none"/></svg>
<div class="t" style="left:605px;top:414px;font-size:7.24px;color:#fff">Run Import</div>
<div class="a" style="left:645px;top:410.9px;width:30px;height:13.1px;background:#3d89d1;border:0.6px solid #3179c2"></div>
<div class="t" style="left:655.8px;top:414px;font-size:7.47px;color:#fff">OK</div>
<div class="a" style="left:678.3px;top:410.5px;width:31.7px;height:13.5px;background:#fff;border:1px solid #ddd;border-radius:1px"></div>
<div class="t" style="left:684.7px;top:414px;font-size:7.24px;color:#444">Cancel</div>

<!-- ============ TASKBAR ============ -->
<div class="a" style="left:0;top:467px;width:780px;height:20px;background:#1e2b2f"></div>
<div class="a" style="left:0;top:467px;width:24.2px;height:20px;background:#1a2a2e"></div>
<svg style="left:8px;top:472.3px" width="9" height="9"><path d="M0 1.1L3.6 0.6V4.1H0Z M4.2 0.5L8.4 0V4.1H4.2Z M0 4.7H3.6V8.1L0 7.6Z M4.2 4.7H8.4V8.8L4.2 8.2Z" fill="#fff"/></svg>
<div class="a" style="left:24.2px;top:467px;width:174.3px;height:20px;background:#323232"></div>
<svg style="left:30px;top:472px" width="10" height="10"><circle cx="6" cy="3.8" r="2.8" stroke="#fff" stroke-width="0.9" fill="none"/><path d="M4 5.8L0.8 9" stroke="#fff" stroke-width="1"/></svg>
<div class="t" style="left:45px;top:473.3px;font-size:8.57px;color:#e6e6e6">Type here to search</div>
<div class="a" style="left:207px;top:473px;width:8.4px;height:8.4px;border-radius:50%;border:1.6px solid #fff"></div>
<svg style="left:230px;top:472px" width="12" height="10"><path d="M1 1.2H6.3M1 8.6H6.3" stroke="#ddd" stroke-width="0.9"/><rect x="2" y="2.6" width="3.3" height="4.6" stroke="#ddd" stroke-width="0.9" fill="none"/><path d="M9.2 1V2.2M9.2 3.6V8.8" stroke="#ddd" stroke-width="1"/></svg>
<div class="a" style="left:250px;top:467px;width:23.5px;height:20px;background:#3b474b"></div>
<div class="a" style="left:250px;top:486px;width:23.5px;height:1px;background:#d9cdb0"></div>
<svg style="left:0;top:467px" width="780" height="20" viewBox="0 467 780 20">
<circle cx="261.5" cy="477" r="5.8" fill="#db4437"/>
<path d="M261.5 477L256.5 479.9A5.8 5.8 0 0 0 264.4 482Z" fill="#0f9d58"/>
<path d="M261.5 477L264.4 482A5.8 5.8 0 0 0 266.5 474.1L261.5 474.1Z" fill="#f4b400"/>
<circle cx="261.5" cy="477" r="2.6" fill="#fff"/><circle cx="261.5" cy="477" r="2" fill="#4285f4"/>
<circle cx="286.9" cy="477" r="4.8" stroke="#3fc13f" stroke-width="1.7" fill="none" stroke-dasharray="26 4"/>
<circle cx="312" cy="477" r="6" fill="#2fb36a"/><circle cx="312" cy="476" r="3" fill="#7ed9a0" opacity="0.7"/>
<circle cx="336.9" cy="477" r="5.9" fill="#e8ecef"/><path d="M336.9 477V471.1A5.9 5.9 0 0 1 342.8 477Z" fill="#e2c46a"/><circle cx="336.9" cy="477" r="5.9" stroke="#b9c0c6" stroke-width="0.6" fill="none"/>
<circle cx="362.3" cy="477" r="5.8" fill="#f0642e"/><path d="M359.3 480.5L365.3 473.5" stroke="#fff" stroke-width="1.1"/>
<rect x="381.7" y="472" width="11.2" height="9.2" fill="#000" stroke="#8a8a8a" stroke-width="0.7"/><path d="M382.5 473.2H390" stroke="#777" stroke-width="0.6"/>
<circle cx="415.5" cy="473.5" r="1.8" fill="#7b83eb"/><rect x="408" y="473" width="8" height="8" rx="1" fill="#5b5fc7"/><rect x="413" y="475" width="5" height="6" rx="2" fill="#7b83eb"/><path d="M410 475H414M412 475V479.5" stroke="#fff" stroke-width="0.9"/><circle cx="416.8" cy="480.8" r="2.2" fill="#92c353"/>
<rect x="435" y="471.5" width="9" height="10" rx="1" fill="#1490df"/><rect x="431.5" y="473.5" width="6.5" height="6.5" rx="0.6" fill="#0a5fb3"/><circle cx="434.7" cy="476.8" r="1.7" stroke="#fff" stroke-width="0.8" fill="none"/>
<path d="M457.7 472.5H462L463 473.5H468.8V481H457.7Z" fill="#f2c94c"/><rect x="457.7" y="475" width="11.1" height="6" fill="#ffd86a"/><rect x="460.5" y="477" width="5.5" height="3.5" fill="#2f8ad8"/>
<rect x="483" y="471.5" width="10.8" height="10" fill="#ffd400"/><path d="M493.8 476.5V481.5H488.8Z" fill="#4a3a10"/>
<rect x="509.5" y="471.5" width="9.7" height="10" rx="1" fill="#2b7cd3"/><rect x="507" y="473.5" width="6.5" height="6.5" rx="0.6" fill="#185abd"/><path d="M507.8 475L508.8 479L510.2 476L511.6 479L512.6 475" stroke="#fff" stroke-width="0.6" fill="none"/>
<rect x="402.3" y="486" width="20.7" height="1" fill="#e6d3a6"/>
<rect x="427.7" y="486" width="20.5" height="1" fill="#e6d3a6"/>
<rect x="478" y="486" width="20.9" height="1" fill="#e6d3a6"/>
<rect x="503" y="486" width="20.8" height="1" fill="#e6d3a6"/>
<circle cx="604.1" cy="477.1" r="4.9" fill="#f7b500"/><circle cx="603.5" cy="476.3" r="3.5" fill="#ffcf3a"/>
<path d="M661.7 479L664.3 476.2L666.9 479" stroke="#fff" stroke-width="0.9" fill="none"/>
<path d="M673 479.8H680A1.8 1.8 0 0 0 680 476.2A2.6 2.6 0 0 0 675.2 475.4A2 2 0 0 0 673 479.8Z" fill="#3a96dd"/>
<rect x="685" y="474.5" width="7" height="4.5" stroke="#fff" stroke-width="0.8" fill="none"/><rect x="685.8" y="475.3" width="4" height="2.9" fill="#fff"/><rect x="692.3" y="475.8" width="0.8" height="2" fill="#fff"/>
<path d="M697.5 480.5A6 6 0 0 1 703.5 474.5M699.5 480.5A4 4 0 0 1 703.5 476.5M701.5 480.5A2 2 0 0 1 703.5 478.5" stroke="#9a9a9a" stroke-width="0.6" fill="none"/><path d="M703.3 474.5V480.5H697.3" stroke="#9a9a9a" stroke-width="0.6" fill="none"/>
<path d="M709 476H710.6L713 474V480.5L710.6 478.5H709Z" stroke="#fff" stroke-width="0.7" fill="none"/><path d="M714.5 475.2A3 3 0 0 1 714.5 479.3M716 474A5 5 0 0 1 716 480.5" stroke="#fff" stroke-width="0.6" fill="none"/>
<path d="M759.2 472.5H767.8V480H764.6L763.4 481.4L762.2 480H759.2Z" stroke="#d0d0d0" stroke-width="0.8" fill="none"/><path d="M777.7 467V487" stroke="#4a5558" stroke-width="0.7"/>
</svg>
<div class="t" style="left:613.9px;top:474.5px;font-size:7.82px;color:#fff">80°F</div>
<div class="t" style="left:632.6px;top:474.5px;font-size:7.82px;color:#fff">Sunny</div>
<div class="t" style="left:723.5px;top:469.6px;font-size:6.96px;color:#fff">10:41 AM</div>
<div class="t" style="left:721px;top:478px;font-size:7.01px;color:#fff">10/12/2021</div>
</body></html>
